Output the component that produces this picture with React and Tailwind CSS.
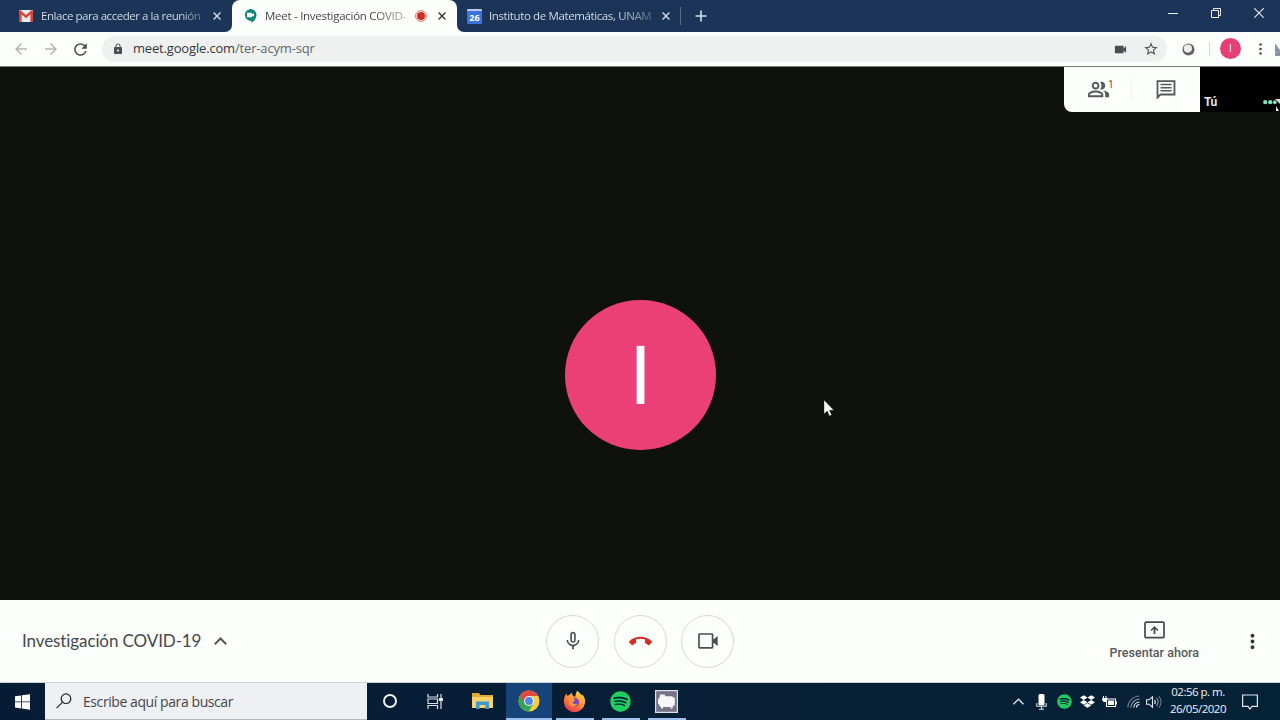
import {
  MdArrowBack,
  MdArrowForward,
  MdCallEnd,
  MdLock,
  MdMicNone,
  MdMoreVert,
  MdOutlinePeopleAlt,
  MdRefresh,
  MdStarBorder,
  MdVideocam,
} from "react-icons/md";
import { FaDropbox, FaSpotify } from "react-icons/fa";

const GmailIcon = () => (
  <svg className="w-[14px] h-[12px] shrink-0" viewBox="0 0 14 12">
    <rect width="14" height="12" rx="1" fill="#ece9e8" />
    <path d="M0 1.2 1.2 0 7 5 12.8 0 14 1.2V12h-2.6V4.4L7 8.2 2.6 4.4V12H0z" fill="#d5463b" />
  </svg>
);

const MeetIcon = () => (
  <svg className="w-[14px] h-[14px] shrink-0" viewBox="0 0 14 14">
    <path d="M6.5 0A6 6 0 0 1 12.5 6c0 3.2-2.2 6-5 7.8V12a6 6 0 0 1-1-12z" fill="#0d8474" />
    <path d="M3 3.800h5v1.200l2-.8v3.400L8 6.900v1.300H3z" fill="#fff" />
  </svg>
);

const CalendarIcon = () => (
  <div className="w-[15px] h-[15px] shrink-0 rounded-[1px] bg-[#3b73dc] border-t-2 border-[#b8c9ef] flex items-center justify-center text-white text-[9px] font-bold leading-none">
    26
  </div>
);

const CloseIcon = ({ className }) => (
  <svg className={className} viewBox="0 0 8 8" fill="none" stroke="currentColor" strokeWidth="1.4">
    <path d="M.6.6 7.4 7.4M7.4.6.6 7.4" />
  </svg>
);

const TabStrip = () => (
  <div className="h-8 bg-[#1b3457] flex shrink-0 text-[11.5px] text-[#d3dce6]">
    <div className="w-[232px] bg-[#fcfefc] flex">
      <div className="w-full bg-[#1b3457] rounded-br-[7px] flex items-center pl-[19px]">
        <GmailIcon />
        <span className="ml-2 w-[162px] whitespace-nowrap tracking-[-0.46px] bg-linear-to-r from-[#dde5ee] from-85% to-[#5d6f88] bg-clip-text text-transparent">
          Enlace para acceder a la reunión
        </span>
        <CloseIcon className="w-2 h-2 ml-[10px]" />
      </div>
    </div>
    <div className="w-[225px] bg-[#1b3457] flex">
      <div className="w-full bg-[#fcfefc] rounded-t-[8px] flex items-center pl-[12px]">
        <MeetIcon />
        <span className="ml-[7px] w-[142px] whitespace-nowrap tracking-[-0.27px] bg-linear-to-r from-[#3c4043] from-75% to-[#b5b8b8] bg-clip-text text-transparent">
          Meet - Investigación COVID-
        </span>
        <svg className="w-3 h-3 ml-[8px]" viewBox="0 0 12 12">
          <circle cx="6" cy="6" r="5.4" fill="none" stroke="#d86d68" />
          <circle cx="6" cy="6" r="4" fill="#d32b23" />
        </svg>
        <CloseIcon className="w-2 h-2 ml-[11px] text-[#333739]" />
      </div>
    </div>
    <div className="flex-1 bg-[#fcfefc] flex">
      <div className="flex-1 bg-[#1b3457] rounded-bl-[7px] flex items-center pl-[10px]">
        <CalendarIcon />
        <span className="ml-[7px] w-[162px] whitespace-nowrap tracking-[-0.38px] bg-linear-to-r from-[#dde5ee] from-80% to-[#5d6f88] bg-clip-text text-transparent">
          Instituto de Matemáticas, UNAM
        </span>
        <CloseIcon className="w-2 h-2 ml-[11px]" />
        <div className="w-px h-[18px] bg-[#5a6c84] ml-[10px]" />
        <svg className="w-[12px] h-[12px] ml-[14px]" viewBox="0 0 12 12" stroke="#d3dce6" strokeWidth="1.7">
          <path d="M6 .5v11M.5 6h11" />
        </svg>
        <div className="ml-auto flex items-center h-7 mb-[6px] mr-[16px] text-[#e8edf2]">
          <div className="w-[10px] h-px bg-current" />
          <svg className="w-[10px] h-[10px] ml-[33px]" viewBox="0 0 10 10" fill="none" stroke="currentColor">
            <path d="M.5 2.5h7v7h-7zM2.5 2.5v-2h7v7h-2" />
          </svg>
          <svg className="w-[10px] h-[10px] ml-[33px]" viewBox="0 0 10 10" stroke="currentColor" strokeWidth="1.1">
            <path d="m.3.3 9.4 9.4M9.7.3.3 9.7" />
          </svg>
        </div>
      </div>
    </div>
  </div>
);

const Toolbar = () => (
  <div className="h-[35px] shrink-0 bg-[#fcfefc] border-b border-[#777] flex items-center pl-[12px] text-[#4b4f52]">
    <MdArrowBack className="w-[18px] h-[18px] text-[#b2b5b5]" />
    <MdArrowForward className="w-[18px] h-[18px] ml-[12px] text-[#b2b5b5]" />
    <MdRefresh className="w-[19px] h-[19px] ml-[11px]" />
    <div className="ml-[12px] w-[1065px] h-[26px] rounded-full bg-[#eff1f1] flex items-center pl-[10px]">
      <MdLock className="w-[12px] h-[12px]" />
      <span className="ml-[9px] text-[13px] tracking-[-0.17px] whitespace-nowrap text-[#62666a]">
        <span className="text-[#34383b]">meet.google.com</span>/ter-acym-sqr
      </span>
      <MdVideocam className="w-[15px] h-[15px] ml-auto" />
      <MdStarBorder className="w-[16px] h-[16px] ml-[15px] mr-[8px]" />
    </div>
    <svg className="w-[13px] h-[13px] ml-[15px]" viewBox="0 0 13 13">
      <circle cx="6.5" cy="6.5" r="6" fill="#5f6263" />
      <circle cx="5.9" cy="5.6" r="4.1" fill="#eceeee" />
      <path d="M10 5.6a4.100 4.100 0 0 1-6.500 3.300 4.500 4.500 0 0 0 6.500-3.300z" fill="#9da0a1" />
    </svg>
    <div className="w-px h-[14px] ml-[14px] bg-[#d4d7d7]" />
    <div className="w-[21px] h-[21px] ml-[10px] mb-px rounded-full bg-[#e83e77] text-white text-[10px] flex items-center justify-center">
      I
    </div>
    <svg className="w-[3px] h-[12px] ml-[18px]" viewBox="0 0 3 12" fill="currentColor">
      <circle cx="1.5" cy="1.5" r="1.3" />
      <circle cx="1.5" cy="6" r="1.3" />
      <circle cx="1.5" cy="10.5" r="1.3" />
    </svg>
    <svg className="w-[5px] h-[13px] ml-auto" viewBox="0 0 5 13">
      <path d="M0 0 5 7v6H0z" fill="#9a93ae" />
      <path d="M0 6h3v2H0zM2 10h3v2H2z" fill="#5fa394" />
    </svg>
  </div>
);

const Stage = () => (
  <main className="relative h-[533px] shrink-0 bg-[#0e110e] flex justify-center items-start">
    <div className="mt-[233px] w-[151px] h-[150px] rounded-full bg-[#ea4077] text-white font-[Roboto] text-[81px] leading-none flex items-center justify-center pt-[2px] pl-px">
      I
    </div>

    {/* Participants, chat and own preview */}
    <div className="absolute top-0 right-0 flex h-[45px]">
      <div className="w-[136px] bg-[#fcfefc] rounded-bl-[8px] flex items-center text-[#55595d]">
        <div className="w-[68px] flex justify-center border-r border-[#f0f2f0]">
          <MdOutlinePeopleAlt className="w-[23px] h-[23px] -mt-px mr-[5px]" />
          <span className="w-0 text-[10px] leading-none -ml-[7px] mt-px font-[Roboto]">1</span>
        </div>
        <div className="w-[68px] flex justify-center">
          <svg className="w-[20px] h-[19px] -mt-px" viewBox="0 0 20 19" fill="none" stroke="currentColor" strokeWidth="1.8">
            <path d="M1.500 1.200h17v13.300H4.500l-3 3z" />
            <path d="M4.500 4.600h11M4.500 7.700h11M4.500 10.800h11" strokeWidth="1.500" />
          </svg>
        </div>
      </div>
      <div className="w-[80px] bg-black flex items-end pb-[3px] pl-[4px] text-[#e4e7e4]">
        <span className="font-[Roboto] font-bold text-[12px] leading-[14px] tracking-[-0.4px]">Tú</span>
        <svg className="w-[17px] h-[13px] ml-auto -mb-[3px]" viewBox="0 0 17 13">
          <circle cx="2.2" cy="3.2" r="2.1" fill="#81e3c3" />
          <circle cx="7.2" cy="3.2" r="2.1" fill="#81e3c3" />
          <circle cx="11.8" cy="3.2" r="1.9" fill="#81e3c3" />
          <path d="M12 0h5v5z" fill="#ded7cb" />
          <path d="m13 7 3 5h-3z" fill="#f3eadc" />
        </svg>
      </div>
    </div>

    {/* Mouse pointer */}
    <svg className="absolute left-[823px] top-[332px] w-[12px] h-[19px]" viewBox="0 0 12 19">
      <path d="M1 1v14l3.2-3 2.2 5 2.3-1-2.2-4.8h4.4z" fill="#fff" stroke="#0a0a0a" strokeWidth=".4" />
    </svg>
  </main>
);

const RoundButton = ({ children }) => (
  <div className="w-[53px] h-[53px] rounded-full border border-[#d6d9d7] flex items-center justify-center text-[#4b4f54]">
    {children}
  </div>
);

const ControlBar = () => (
  <div className="h-[83px] shrink-0 bg-[#fcfefc] border-b border-[#cfd2d2] grid grid-cols-[1fr_188px_1fr] items-center text-[#44484c]">
    <div className="flex items-center pl-[22px]">
      <span className="font-[Lato] text-[17px] tracking-[-0.1px] w-[179px] whitespace-nowrap">Investigación COVID-19</span>
      <svg className="w-[13px] h-[8px] ml-[13px]" viewBox="0 0 13 8" fill="none" stroke="#55595c" strokeWidth="2">
        <path d="m.8 7.2 5.7-5.7 5.7 5.7" />
      </svg>
    </div>
    <div className="flex justify-between">
      <RoundButton>
        <MdMicNone className="w-[22px] h-[22px]" />
      </RoundButton>
      <RoundButton>
        <MdCallEnd className="w-[23px] h-[23px] text-[#d62d27]" />
      </RoundButton>
      <RoundButton>
        <svg className="w-[20px] h-[16px]" viewBox="0 0 20 16">
          <rect x="1" y="1" width="13.6" height="13.8" rx=".6" fill="none" stroke="currentColor" strokeWidth="1.7" />
          <path d="M15 6.700 19.700 3v10L15 9.300z" fill="currentColor" />
        </svg>
      </RoundButton>
    </div>
    <div className="flex items-center justify-end pr-[16px]">
      <div className="flex flex-col items-center">
        <svg className="w-[21px] h-[18px]" viewBox="0 0 21 18">
          <rect x="1" y="1.2" width="19" height="15.4" rx="1" fill="none" stroke="currentColor" strokeWidth="1.7" />
          <path d="m10.500 5 4 4-1.100 1.100-2-2V13H9.600V8.100l-2 2L6.500 9z" fill="currentColor" />
        </svg>
        <span className="mt-[5px] font-[Roboto] font-medium text-[12.5px] leading-[18px] tracking-[0.02px] text-[#55595c]">
          Presentar ahora
        </span>
      </div>
      <MdMoreVert className="w-[23px] h-[23px] ml-[42px] text-[#303437]" />
    </div>
  </div>
);

const ChromeIcon = () => (
  <svg className="w-[22px] h-[22px]" viewBox="0 0 22 22">
    <circle cx="11" cy="11" r="10.5" fill="#f6cc45" />
    <path d="M11 11 1.900 5.700A10.500 10.500 0 0 0 10.700 21.500l4.800-8z" fill="#35a457" />
    <path d="M1.900 5.700A10.500 10.500 0 0 1 20.200 6H11l-4.500 7.500z" fill="#df4b3f" />
    <circle cx="11" cy="11" r="5" fill="#f3f5f7" />
    <circle cx="11" cy="11" r="3.9" fill="#4a87e8" />
  </svg>
);

const FirefoxIcon = () => (
  <svg className="w-[23px] h-[23px] mr-px" viewBox="0 0 23 23">
    <defs>
      <linearGradient id="fox" x1=".8" y1="0" x2=".2" y2="1">
        <stop offset="0" stopColor="#ffe149" />
        <stop offset=".5" stopColor="#ff8a30" />
        <stop offset="1" stopColor="#ef2b5c" />
      </linearGradient>
    </defs>
    <path
      d="M14.500.5c.5 2 3.500 3 4.500 5l.5-1c2 2.500 3 5 2.500 8.500a10.600 10.600 0 0 1-21 0C.5 9 1.500 6 3.500 3.500l.8 2.500 2.500-1.500c1-.5 1.500-1.500 2-2l.7 2.800L12 7c1-3 1-5 2.500-6.500z"
      fill="url(#fox)"
    />
    <path d="M10 8c3-1 7 1.500 6 5.500-1 3.500-5.500 4.500-8 2-1-1-1.500-2.500-1.300-3.500l2.300.6L11.500 11z" fill="#8148bd" />
    <path d="M5.500 8 10 8l2 2-3 1.800c.8 2.500 3.500 3 5.500 1.700-1.500 4-7 4-8.700.5z" fill="#ff9c35" />
  </svg>
);

const FolderIcon = () => (
  <svg className="w-[21px] h-[18px]" viewBox="0 0 21 18">
    <path d="M0 1h7l1.500 2H21v12.500H0z" fill="#e4a93a" />
    <path d="M0 5h21v11H0z" fill="#f8d26a" />
    <path d="M4 9.500h13V17h-3.500v-4h-6v4H4z" fill="#3a98ce" />
  </svg>
);

const RecorderIcon = () => (
  <svg className="w-[23px] h-[23px] mr-[2px]" viewBox="0 0 23 23">
    <rect x=".6" y=".6" width="21.8" height="21.8" fill="#777287" stroke="#e0e0e6" strokeWidth="1.2" />
    <path d="M5 4.500h4.500l1 1.800H17l1.500 1.200h1.300v8h-1.300l-1 1.500v1.500h-2V17H8v1.500H6V17l-1.500-1-.5-2H3V9l1.500-1z" fill="#f7f7f7" />
  </svg>
);

const TaskItem = ({ children, active, running }) => (
  <div className={`w-[46px] h-full flex flex-col items-center ${active ? "bg-[#174478]" : ""}`}>
    <div className="h-[35px] flex items-center pt-[1px]">{children}</div>
    {running && <div className={`h-[2px] mt-auto bg-[#9dc0ee] ${active ? "w-full" : "w-[38px]"}`} />}
  </div>
);

const Taskbar = () => (
  <div className="h-[37px] shrink-0 bg-linear-to-r from-[#061c35] to-[#062236] flex items-center text-white">
    <div className="w-[45px] flex justify-center">
      <svg className="w-[15px] h-[16px]" viewBox="0 0 15 16" fill="#fff">
        <path d="M0 2.300 6.200 1.400v6.100H0zM7 1.300 15 .2v7.300H7zM0 8.300h6.200v6.200L0 13.600zM7 8.300h8v7.400l-8-1.100z" />
      </svg>
    </div>
    <div className="w-[322px] h-full bg-[#eff0f3] border-b border-[#b5b9bf] flex items-center pl-[11px] text-[#43464b]">
      <svg className="w-[16px] h-[16px]" viewBox="0 0 16 16" fill="none" stroke="#222" strokeWidth="1.2">
        <circle cx="10" cy="5.7" r="4.8" />
        <path d="M6.600 9.200.6 15.200" />
      </svg>
      <span className="ml-[11px] text-[14px] tracking-[-0.42px] whitespace-nowrap">Escribe aquí para buscar</span>
    </div>
    <TaskItem>
      <div className="w-[14px] h-[14px] rounded-full border-2 border-[#edf1f5]" />
    </TaskItem>
    <TaskItem>
      <svg className="w-[16px] h-[15px] mr-[2px]" viewBox="0 0 16 15" fill="none" stroke="#dce2e8" strokeWidth="1.2">
        <path d="M1 0v3h9.500V0M1 15v-3.500h9.500V15M1 5h9.500v4.500H1zM14 0v15" />
        <path d="M12.500 4.500h3v2h-3z" fill="#fff" />
      </svg>
    </TaskItem>
    <TaskItem>
      <FolderIcon />
    </TaskItem>
    <div className="h-full flex ml-px">
      <TaskItem active running>
        <ChromeIcon />
      </TaskItem>
      <TaskItem running>
        <FirefoxIcon />
      </TaskItem>
      <TaskItem running>
        <FaSpotify className="w-[21px] h-[21px] mr-[2px] text-[#1fd05f]" />
      </TaskItem>
      <TaskItem running>
        <RecorderIcon />
      </TaskItem>
    </div>

    {/* System tray */}
    <div className="ml-auto flex items-center">
      <svg className="w-[11px] h-[7px]" viewBox="0 0 11 7" fill="none" stroke="#e2e7ec" strokeWidth="1.3">
        <path d="m.5 6.200 5-5 5 5" />
      </svg>
      <svg className="w-[11px] h-[16px] ml-[12px]" viewBox="0 0 11 16">
        <rect x="2.5" y="0" width="6" height="11.5" rx="1.5" fill="#fff" />
        <path d="M.8 9v3.200h9.400V9M5.500 12.500v3M3 15.300h5" fill="none" stroke="#d7dde3" strokeWidth="1.1" />
      </svg>
      <FaSpotify className="w-[15px] h-[15px] ml-[10px] text-[#22c95e]" />
      <FaDropbox className="w-[15px] h-[15px] ml-[8px]" />
      <svg className="w-[15px] h-[12px] ml-[7px]" viewBox="0 0 15 12">
        <path d="M4.500 3h9v7.500h-9z" fill="#062033" stroke="#fff" strokeWidth="1.1" />
        <path d="M6 4.500h6V9H6zM14 5.500h1v3h-1z" fill="#fff" />
        <path d="M1 0h1v2h1.500V0h1v2h.8v2.500L3.800 6H1.800L.2 4.500V2H1z" fill="#fff" />
      </svg>
      <svg className="w-[13px] h-[13px] ml-[10px]" viewBox="0 0 13 13" fill="none" strokeWidth="1.2">
        <path d="M.8 12.500A12 12 0 0 1 12.500 1" stroke="#627486" />
        <path d="M3.800 12.500A9 9 0 0 1 12.500 4" stroke="#91a0ad" />
        <path d="M6.800 12.500a6 6 0 0 1 5.700-5.500M9.500 12.500a3 3 0 0 1 3-3" stroke="#e5eaee" />
      </svg>
      <svg className="w-[16px] h-[14px] ml-[6px]" viewBox="0 0 16 14" fill="none" stroke="#e3e8ed" strokeWidth="1.1">
        <path d="M.6 4.800h2.500l3.400-3v10.400l-3.400-3H.6z" />
        <path d="M8.500 5a3 3 0 0 1 0 4" />
        <path d="M10.500 3a6 6 0 0 1 0 8" stroke="#9ba9b5" />
        <path d="M12.700 1.200a8.500 8.500 0 0 1 0 11.600" stroke="#63778a" />
      </svg>
      <div className="w-[74px] pr-[2px] mt-[-3px] text-center text-[11.5px] leading-[17px] tracking-[-0.5px] whitespace-nowrap text-[#edf2f5]">
        <div>02:56 p. m.</div>
        <div>26/05/2020</div>
      </div>
      <svg className="w-[16px] h-[16px] ml-[6px] mr-[22px]" viewBox="0 0 16 16" fill="none" stroke="#e2e7eb" strokeWidth="1.2">
        <path d="M.6 1h14.800v11.300H10L8 15l-2-2.700H.6z" />
      </svg>
    </div>
  </div>
);

export default function App() {
  return (
    <div className="w-[1280px] h-[720px] overflow-hidden flex flex-col font-['Open_Sans','Noto_Sans',sans-serif] bg-[#0e110e]">
      <TabStrip />
      <Toolbar />
      <Stage />
      <ControlBar />
      <Taskbar />
    </div>
  );
}
